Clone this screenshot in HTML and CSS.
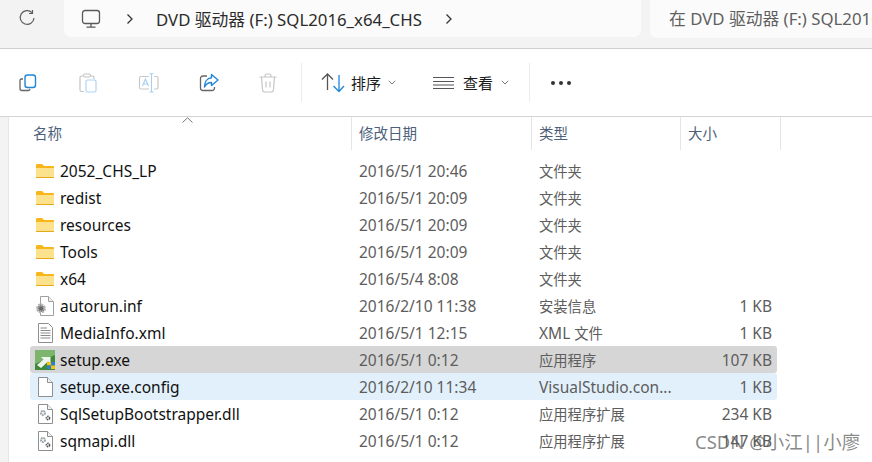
FILE: index.html
```html
<!DOCTYPE html>
<html lang="zh-CN">
<head>
    <meta charset="UTF-8">
    <title>DVD 驱动器 (F:) SQL2016_x64_CHS</title>
    <link rel="stylesheet" href="styles.css">
</head>
<body>
    <svg class="defs" width="0" height="0">
        <symbol id="folder" viewBox="0 0 20 16">
            <path d="M1 2.500C1 1.700 1.600 1 2.400 1H7L9 3H18C18.600 3 19 3.400 19 4V5H1Z" fill="#f9b61a"/>
            <path d="M1 5H19V14.200C19 14.700 18.600 15 18.200 15H1.800C1.400 15 1 14.700 1 14.200Z" fill="#fde28e"/>
            <path d="M1 14H19V14.400C19 14.800 18.600 15 18.200 15H1.800C1.400 15 1 14.800 1 14.400Z" fill="#e8a81c"/>
        </symbol>
        <symbol id="page" viewBox="0 0 16 20">
            <path d="M1.500 .5H10.500L15.500 5.500V19.500H1.500Z" fill="#fff" stroke="#8f8f8f"/>
            <path d="M10.500 .5V5.500H15.500" fill="#f2f2f2" stroke="#8f8f8f"/>
        </symbol>
        <symbol id="gears" viewBox="0 0 16 20">
            <path d="M1.500 .5H10.500L15.500 5.500V19.500H1.500Z" fill="#fff" stroke="#8f8f8f"/>
            <path d="M10.500 .5V5.500H15.500" fill="#f2f2f2" stroke="#8f8f8f"/>
            <circle cx="6" cy="9" r="2" fill="none" stroke="#9aa3ab" stroke-width="2" stroke-dasharray="1.600 .6"/>
            <circle cx="11" cy="14" r="1.600" fill="none" stroke="#555" stroke-width="1.600" stroke-dasharray="1.400 .6"/>
        </symbol>
    </svg>

    <header class="topbar">
        <svg class="refresh" width="18" height="18" viewBox="0 0 18 18" fill="none" stroke="#5c5c5c" stroke-width="1.200">
            <path d="M14 3.600A6.900 6.900 0 1 0 16 9"/>
            <path d="M14.500 1V4.500H11"/>
        </svg>
        <div class="crumbs">
            <svg width="20" height="20" viewBox="0 0 20 20" fill="none" stroke="#5a5a5a" stroke-width="1.300">
                <rect x="1.500" y="1.500" width="17" height="13" rx="2.500"/>
                <path d="M10 14.500V18M5.500 18.200H14.500"/>
            </svg>
            <svg class="chev" width="8" height="12" viewBox="0 0 8 12" fill="none" stroke="#333" stroke-width="1.300"><path d="M1.500 1.500 6 6 1.500 10.500"/></svg>
            <span class="crumb-text">DVD 驱动器 (F:) SQL2016_x64_CHS</span>
            <svg class="chev chev-end" width="8" height="12" viewBox="0 0 8 12" fill="none" stroke="#333" stroke-width="1.300"><path d="M1.500 1.500 6 6 1.500 10.500"/></svg>
        </div>
        <div class="search">在 DVD 驱动器 (F:) SQL2016_x64_CHS 中搜索</div>
    </header>

    <nav class="toolbar">
        <div class="tool-icons">
            <svg width="20" height="20" viewBox="0 0 20 20" fill="none">
                <path d="M5 6H3.500A1.500 1.500 0 0 0 2 7.500V15.500A2 2 0 0 0 4 17.500H10.500A2 2 0 0 0 12 16" stroke="#666" stroke-width="1.300"/>
                <rect x="7" y="2" width="10.500" height="12.500" rx="2.500" stroke="#1f86d8" stroke-width="1.400"/>
            </svg>
            <svg width="20" height="20" viewBox="0 0 20 20" fill="none">
                <path d="M5 3H3.500A1.500 1.500 0 0 0 2 4.500V17A1.500 1.500 0 0 0 3.500 18.500H6M13 3H14.500A1.500 1.500 0 0 1 16 4.500V6" stroke="#c4c4c4" stroke-width="1.200"/>
                <rect x="5.500" y="1" width="7" height="3" rx="1.500" stroke="#c4c4c4" stroke-width="1.100"/>
                <rect x="8" y="7" width="10" height="12" rx="1.500" stroke="#acd4f4" stroke-width="1.200"/>
            </svg>
            <svg width="22" height="20" viewBox="0 0 22 20" fill="none">
                <path d="M11 3.500H3A1.500 1.500 0 0 0 1.500 5V14.500A1.500 1.500 0 0 0 3 16H11M16 3.500H18.500A1.500 1.500 0 0 1 20 5V14.500A1.500 1.500 0 0 1 18.500 16H16" stroke="#c8c8c8" stroke-width="1.200"/>
                <path d="M4.500 13 7.500 6 10.500 13M5.500 11H9.500" stroke="#a8cff0" stroke-width="1.100"/>
                <path d="M13.500 .8V19M11.500 .8H15.500M11.500 19H15.500" stroke="#a8cff0" stroke-width="1.100"/>
            </svg>
            <svg width="20" height="20" viewBox="0 0 20 20" fill="none">
                <path d="M8 3H4A2.500 2.500 0 0 0 1.500 5.500V15A2.500 2.500 0 0 0 4 17.500H13A2.500 2.500 0 0 0 15.500 15V14" stroke="#666" stroke-width="1.300"/>
                <path d="M12.500 1.500 19 7 12.500 12.500V9.500C9 9.500 7 11 5.500 14 5.500 9 8 5 12.500 4.700Z" stroke="#1f86d8" stroke-width="1.400" stroke-linejoin="round"/>
            </svg>
            <svg width="18" height="20" viewBox="0 0 18 20" fill="none" stroke="#c6c6c6" stroke-width="1.200">
                <path d="M.5 4H17.500M6 4V3A2 2 0 0 1 8 1H10A2 2 0 0 1 12 3V4"/>
                <path d="M2.500 4 3.500 16.500A2.500 2.500 0 0 0 6 19H12A2.500 2.500 0 0 0 14.500 16.500L15.500 4"/>
                <path d="M7 8.500V14.500M11 8.500V14.500"/>
            </svg>
        </div>
        <div class="divider"></div>
        <button class="tool-btn sort">
            <svg width="24" height="20" viewBox="0 0 24 20" fill="none" stroke-width="1.300">
                <path d="M1 6.500 6.500 1 12 6.500M6.500 1V17" stroke="#555"/>
                <path d="M12.500 13 18 18.500 23 13M18 18V2" stroke="#1f86d8"/>
            </svg>
            <span>排序</span>
            <svg class="caret" width="8" height="5" viewBox="0 0 8 5" fill="none" stroke="#777"><path d="M.8 .8 4 4 7.200 .8"/></svg>
        </button>
        <button class="tool-btn view">
            <svg width="21" height="14" viewBox="0 0 21 14" fill="none" stroke="#555" stroke-width="1.100">
                <path d="M0 1.500H21M0 5.500H21M0 9H21M0 12.500H21"/>
            </svg>
            <span>查看</span>
            <svg class="caret" width="8" height="5" viewBox="0 0 8 5" fill="none" stroke="#777"><path d="M.8 .8 4 4 7.200 .8"/></svg>
        </button>
        <div class="divider"></div>
        <div class="more"><i></i><i></i><i></i></div>
    </nav>

    <main class="pane">
        <div class="gutter"></div>
        <section class="listing">
            <div class="columns">
                <div class="col col-name">名称
                    <svg class="sort-arrow" width="11" height="6" viewBox="0 0 11 6" fill="none" stroke="#777"><path d="M.5 5.500 5.500 .8 10.500 5.500"/></svg>
                </div>
                <div class="col col-date">修改日期</div>
                <div class="col col-type">类型</div>
                <div class="col col-size">大小</div>
            </div>
            <div class="rows">
                <div class="row"><div class="name"><svg class="ico"><use href="#folder"/></svg>2052_CHS_LP</div><div>2016/5/1 20:46</div><div class="cjk">文件夹</div><div class="size"></div></div>
                <div class="row"><div class="name"><svg class="ico"><use href="#folder"/></svg>redist</div><div>2016/5/1 20:09</div><div class="cjk">文件夹</div><div class="size"></div></div>
                <div class="row"><div class="name"><svg class="ico"><use href="#folder"/></svg>resources</div><div>2016/5/1 20:09</div><div class="cjk">文件夹</div><div class="size"></div></div>
                <div class="row"><div class="name"><svg class="ico"><use href="#folder"/></svg>Tools</div><div>2016/5/1 20:09</div><div class="cjk">文件夹</div><div class="size"></div></div>
                <div class="row"><div class="name"><svg class="ico"><use href="#folder"/></svg>x64</div><div>2016/5/4 8:08</div><div class="cjk">文件夹</div><div class="size"></div></div>
                <div class="row"><div class="name">
                    <svg class="ico" viewBox="0 0 20 20">
                        <path d="M5.500 .5H13.500L18.500 5.500V19.500H5.500Z" fill="#fff" stroke="#a0a0a0"/>
                        <path d="M13.500 .5V5.500H18.500" fill="#eee" stroke="#a0a0a0"/>
                        <circle cx="6" cy="12.500" r="3.500" fill="#666" stroke="#b4b4b4" stroke-width="3" stroke-dasharray="1.800 .9"/>
                    </svg>autorun.inf</div><div>2016/2/10 11:38</div><div class="cjk">安装信息</div><div class="size">1 KB</div></div>
                <div class="row"><div class="name">
                    <svg class="ico" viewBox="0 0 20 20">
                        <path d="M3.500 .5H13.500L17.500 4.500V19.500H3.500Z" fill="#fff" stroke="#8f8f8f"/>
                        <path d="M5.500 5H12M5.500 7.500H15.500M5.500 10H15.500M5.500 12.500H15.500M5.500 15H15.500" stroke="#8a8a8a"/>
                    </svg>MediaInfo.xml</div><div>2016/5/1 12:15</div><div>XML <span class="cjk">文件</span></div><div class="size">1 KB</div></div>
                <div class="row row-active"><div class="name">
                    <svg class="ico" viewBox="0 0 20 20">
                        <rect width="20" height="20" fill="#3c8a3a"/>
                        <path d="M0 0H20V5L0 14Z" fill="#7cb56b"/>
                        <path d="M2 15 8.500 9.500 6 7H15.500V13.500L13 11.500 6 18Z" fill="#f1f3ee"/>
                        <path d="M12 12H16V15.500H12Z" fill="#f2c413"/>
                        <path d="M16 12H20V15.500H16ZM12 15.500H16V19H12Z" fill="#2f7fd0"/>
                        <path d="M16 15.500H20V19H16Z" fill="#f2c413"/>
                    </svg>setup.exe</div><div>2016/5/1 0:12</div><div class="cjk">应用程序</div><div class="size">107 KB</div></div>
                <div class="row row-hover"><div class="name"><svg class="ico"><use href="#page"/></svg>setup.exe.config</div><div>2016/2/10 11:34</div><div>VisualStudio.con...</div><div class="size">1 KB</div></div>
                <div class="row"><div class="name"><svg class="ico"><use href="#gears"/></svg>SqlSetupBootstrapper.dll</div><div>2016/5/1 0:12</div><div class="cjk">应用程序扩展</div><div class="size">234 KB</div></div>
                <div class="row"><div class="name"><svg class="ico"><use href="#gears"/></svg>sqmapi.dll</div><div>2016/5/1 0:12</div><div class="cjk">应用程序扩展</div><div class="size">147 KB</div></div>
            </div>
        </section>
    </main>

    <div class="watermark">CSDN @小江||小廖</div>
</body>
</html>
```

FILE: styles.css
```css
* {
    box-sizing: border-box;
}

html, body {
    height: 100%;
}

body {
    margin: 0;
    width: 872px;
    height: 462px;
    overflow: hidden;
    position: relative;
    background: #fff;
    color: #1b1b1b;
    font-family: "Noto Sans", "Noto Sans CJK SC", sans-serif;
    font-size: 15.5px;
}

.defs {
    position: absolute;
}

.topbar {
    height: 49px;
    display: flex;
    align-items: flex-start;
    background: #f3f3f3;
    border-bottom: 1px solid #cfcfcf;
    overflow: hidden;
}

.refresh {
    margin: 9px 0 0 18px;
    flex: none;
}

.crumbs {
    width: 577px;
    height: 37px;
    margin-left: 28px;
    padding: 0 0 0 17px;
    display: flex;
    align-items: center;
    flex: none;
    background: #fbfbfb;
    border-radius: 0 0 7px 7px;
}

.crumbs .chev {
    margin: 0 0 0 25px;
    flex: none;
}

.crumbs .chev-end {
    margin-left: 23px;
}

.crumb-text {
    margin-left: 22px;
    font-size: 16.8px;
    color: #2b2b2b;
    white-space: nowrap;
}

.search {
    width: 240px;
    height: 38px;
    margin-left: 9px;
    padding: 0 0 2px 19px;
    display: flex;
    align-items: center;
    flex: none;
    background: #fbfbfb;
    border-radius: 0 0 0 7px;
    color: #5f5f5f;
    font-size: 16.8px;
    white-space: nowrap;
}

.toolbar {
    height: 68px;
    display: flex;
    align-items: center;
    border-bottom: 1px solid #d4d4d4;
    background: #fff;
}

.tool-icons {
    width: 301px;
    padding: 0 24px 0 18px;
    display: flex;
    justify-content: space-between;
    align-items: center;
}

.divider {
    width: 1px;
    height: 39px;
    background: #ececec;
    flex: none;
}

.tool-btn {
    display: flex;
    align-items: center;
    border: 0;
    padding: 0;
    background: none;
    font: inherit;
    font-size: 15px;
    color: #1b1b1b;
}

.sort {
    margin-left: 19px;
    gap: 6px;
}

.sort .caret {
    margin-left: 1px;
}

.view {
    margin: 0 20px 0 37px;
    gap: 9px;
}

.view .caret {
    margin-left: -1px;
}

.more {
    margin-left: 21px;
    display: flex;
    gap: 4px;
}

.more i {
    width: 4px;
    height: 4px;
    border-radius: 50%;
    background: #333;
}

.pane {
    display: flex;
    height: 345px;
}

.gutter {
    width: 9px;
    background: #f3f3f3;
    border-right: 1px solid #e6e6e6;
    flex: none;
}

.listing {
    width: 771px;
    flex: none;
}

.columns {
    height: 33px;
    display: grid;
    grid-template-columns: 343px 180px 149px 100px;
}

.col {
    position: relative;
    padding: 5px 0 0 7px;
    border-right: 1px solid #e5e5e5;
    color: #4c607a;
    font-size: 14.5px;
}

.col-name {
    padding-left: 24px;
}

.sort-arrow {
    position: absolute;
    top: 0;
    left: 173px;
}

.rows {
    margin-left: 21px;
    width: 747px;
}

.row {
    height: 27px;
    padding-left: 5px;
    display: grid;
    grid-template-columns: 324px 180px 143px 90px;
    align-items: center;
    color: #5d5d5d;
    white-space: nowrap;
}

.row:first-child {
    margin-top: 7px;
}

.cjk {
    font-size: 14.3px;
}

.name {
    display: flex;
    align-items: center;
    gap: 5px;
    color: #111;
}

.ico {
    width: 20px;
    height: 20px;
    flex: none;
}

.size {
    text-align: right;
}

.row-active {
    background: #d6d6d6;
    border-radius: 3px;
}

.row-hover {
    background: #e2f0fb;
    border-radius: 3px;
}

.watermark {
    position: absolute;
    left: 695px;
    top: 428px;
    color: rgba(90, 90, 90, 0.72);
    font-size: 18.5px;
    white-space: nowrap;
}
```
